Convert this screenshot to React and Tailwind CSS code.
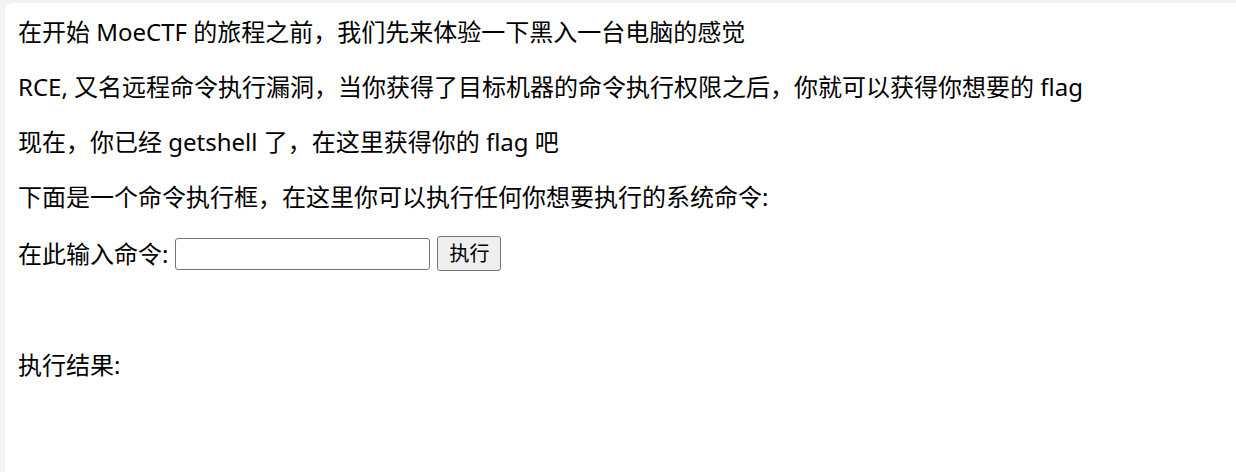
import React from 'react';

const lines = [
  'RCE, 又名远程命令执行漏洞，当你获得了目标机器的命令执行权限之后，你就可以获得你想要的 flag',
  '现在，你已经 getshell 了，在这里获得你的 flag 吧',
  '下面是一个命令执行框，在这里你可以执行任何你想要执行的系统命令:',
];

export default function App() {
  return (
    <div className="h-screen w-full bg-[#f3f3f3] pl-[5px] pt-[3px] overflow-hidden">
      <div
        className="h-full bg-white rounded-tl-[8px] pl-[13px] pt-[13px] text-[24px] leading-[31px] text-black"
        style={{ fontFamily: '"Noto Sans", "Noto Sans CJK SC", sans-serif' }}
      >
        <div>在开始 MoeCTF 的旅程之前，我们先来体验一下黑入一台电脑的感觉</div>
        {lines.map((t) => (
          <p key={t} className="mt-[24px]">
            {t}
          </p>
        ))}

        {/* command form */}
        <form className="mt-[24px] flex items-center" onSubmit={(e) => e.preventDefault()}>
          <label>在此输入命令:</label>
          <input
            type="text"
            className="ml-[7px] w-[255px] h-[32px] border border-[#767676] rounded-[3px] bg-white px-1 text-[20px]"
          />
          <button
            type="submit"
            className="ml-[7px] w-[64px] h-[35px] border border-[#767676] rounded-[3px] bg-[#efefef] text-[20px] leading-none"
          >
            执行
          </button>
        </form>

        <div className="mt-[78px]">执行结果:</div>
      </div>
    </div>
  );
}
